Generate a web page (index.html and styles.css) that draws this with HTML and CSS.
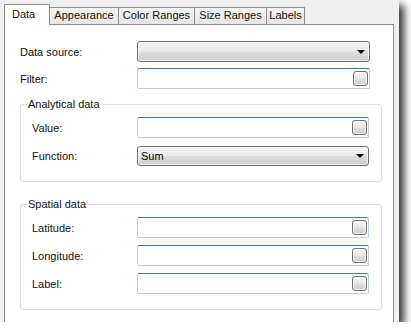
FILE: index.html
```html
<!DOCTYPE html>
<html>
<head>
<meta charset="utf-8">
<link rel="stylesheet" href="styles.css">
</head>
<body>
<div class="window">
  <div class="tabs">
    <div class="tab active">Data</div>
    <div class="tab w-app">Appearance</div>
    <div class="tab w-color">Color Ranges</div>
    <div class="tab w-size">Size Ranges</div>
    <div class="tab w-labels">Labels</div>
  </div>
  <div class="panel">
    <div class="rows outer">
      <label class="lbl">Data source:</label>
      <div class="combo"><span class="combo-text"></span><span class="arrow"></span></div>
      <label class="lbl">Filter:</label>
      <div class="field"><span class="btn"></span></div>
    </div>

    <fieldset class="group first">
      <legend>Analytical data</legend>
      <div class="rows inner">
        <label class="lbl">Value:</label>
        <div class="field"><span class="btn"></span></div>
        <label class="lbl">Function:</label>
        <div class="combo short"><span class="combo-text">Sum</span><span class="arrow"></span></div>
      </div>
    </fieldset>

    <fieldset class="group second">
      <legend>Spatial data</legend>
      <div class="rows inner">
        <label class="lbl">Latitude:</label>
        <div class="field"><span class="btn"></span></div>
        <label class="lbl">Longitude:</label>
        <div class="field"><span class="btn"></span></div>
        <label class="lbl">Label:</label>
        <div class="field"><span class="btn"></span></div>
      </div>
    </fieldset>
  </div>
</div>
</body>
</html>
```

FILE: styles.css
```css
html, body {
  margin: 0;
  padding: 0;
  background: #ffffff;
}

body {
  font-family: "Liberation Sans", Arial, sans-serif;
  font-size: 11px;
  color: #000000;
}

.window {
  width: 399px;
  height: 322px;
  box-sizing: border-box;
  background: #f0f0f0;
  padding: 4px 5px 0 4px;
  display: flex;
  flex-direction: column;
  overflow: hidden;
  box-shadow: 5px 5px 8px rgba(0, 0, 0, 0.8);
}

.tabs {
  display: flex;
  align-items: flex-end;
  height: 20px;
  position: relative;
  z-index: 2;
}

.tab {
  box-sizing: border-box;
  height: 17px;
  border: 1px solid #898c95;
  border-bottom: none;
  margin-left: -1px;
  background: linear-gradient(#f3f3f3, #e6e6e6);
  text-align: center;
  line-height: 15px;
  white-space: nowrap;
  color: #111111;
}

.tab.active {
  margin-left: 0;
  width: 46px;
  height: 21px;
  margin-bottom: -1px;
  background: #ffffff;
  text-align: left;
  padding-left: 7px;
  line-height: 18px;
}

.w-app { width: 69px; margin-left: 0; border-left: none; }
.w-color { width: 77px; }
.w-size { width: 73px; }
.w-labels { width: 39px; }

.panel {
  flex: 1;
  background: #ffffff;
  border: 1px solid #898c95;
  border-bottom: none;
  padding: 16px 0 0 15px;
}

.rows {
  display: grid;
  align-items: center;
}

.rows.outer {
  grid-template-columns: 117px 233px;
  grid-auto-rows: 21px;
  row-gap: 6px;
}

.rows.inner {
  grid-template-columns: 105px 232px;
  grid-auto-rows: 21px;
  row-gap: 7px;
}

.lbl {
  white-space: nowrap;
  color: #111111;
}

.field {
  box-sizing: border-box;
  height: 21px;
  border: 1px solid #b5cfe7;
  border-top-color: #3d7bad;
  border-radius: 2px;
  background: #ffffff;
  display: flex;
  justify-content: flex-end;
  align-items: center;
  padding-right: 1px;
}

.btn {
  box-sizing: border-box;
  width: 15px;
  height: 15px;
  border: 1px solid #707070;
  border-radius: 3px;
  background: linear-gradient(#f2f2f2 0%, #ebebeb 45%, #dddddd 55%, #cfcfcf 100%);
  box-shadow: inset 0 0 0 1px rgba(255, 255, 255, 0.7);
}

.combo {
  box-sizing: border-box;
  height: 21px;
  border: 1px solid #707070;
  border-radius: 3px;
  background: linear-gradient(#f2f2f2 0%, #ebebeb 48%, #dddddd 52%, #cfcfcf 100%);
  box-shadow: inset 0 0 0 1px rgba(255, 255, 255, 0.6);
  display: flex;
  align-items: center;
  justify-content: space-between;
  padding: 0 4px 0 3px;
}

.combo.short {
  height: 20px;
}

.arrow {
  width: 0;
  height: 0;
  border-left: 4px solid transparent;
  border-right: 4px solid transparent;
  border-top: 4px solid #000000;
  margin-top: 1px;
}

.group {
  box-sizing: border-box;
  width: 362px;
  margin: 0;
  border: 1px solid #d5dfe5;
  border-radius: 3px;
  padding: 6px 11px 15px 11px;
  min-inline-size: 0;
}

.group.first {
  margin-top: 9px;
}

.group.second {
  margin-top: 16px;
}

.group legend {
  padding: 0 1px;
  margin-left: -5px;
  line-height: 13px;
  color: #111111;
}
```
